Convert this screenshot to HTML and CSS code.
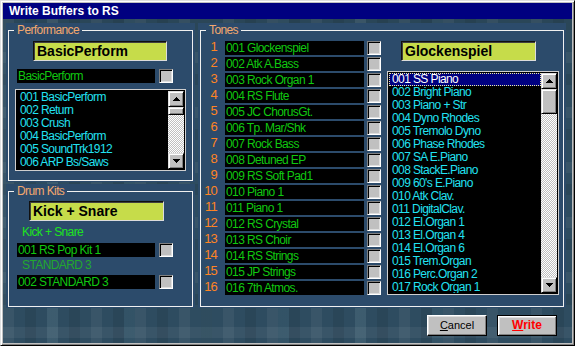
FILE: index.html
```html
<!DOCTYPE html>
<html>
<head>
<meta charset="utf-8">
<link rel="stylesheet" href="styles.css">
</head>
<body>
<div class="window">
  <div class="titlebar">Write Buffers to RS</div>
  <div class="client">
    <div class="main">
      <div class="leftcol">
        <div class="panel perf">
          <fieldset class="group">
            <legend>Performance</legend>
            <div class="lcd lcd-perf">BasicPerform</div>
            <div class="fieldrow fr-perf"><div class="field f-left">BasicPerform</div><span class="chk"></span></div>
            <div class="listbox lb-small">
              <ul class="items">
                <li>001 BasicPerform</li>
                <li>002 Return</li>
                <li>003 Crush</li>
                <li>004 BasicPerform</li>
                <li>005 SoundTrk1912</li>
                <li>006 ARP Bs/Saws</li>
              </ul>
              <div class="sbar">
                <div class="sbtn"><svg width="7" height="4" viewBox="0 0 7 4"><polygon points="3.5,0 7,4 0,4" fill="#000" shape-rendering="crispEdges"/></svg></div>
                <div class="thumb th-small"></div>
                <div class="track"></div>
                <div class="sbtn"><svg width="7" height="4" viewBox="0 0 7 4"><polygon points="0,0 7,0 3.5,4" fill="#000" shape-rendering="crispEdges"/></svg></div>
              </div>
            </div>
          </fieldset>
        </div>
        <div class="panel drums">
          <fieldset class="group">
            <legend>Drum Kits</legend>
            <div class="lcd lcd-drum">Kick + Snare</div>
            <div class="glabel g-bright">Kick + Snare</div>
            <div class="fieldrow fr-drum1"><div class="field f-left">001 RS Pop Kit 1</div><span class="chk"></span></div>
            <div class="glabel g-dark">STANDARD 3</div>
            <div class="fieldrow fr-drum2"><div class="field f-left">002 STANDARD 3</div><span class="chk"></span></div>
          </fieldset>
        </div>
      </div>
      <div class="panel tones">
        <fieldset class="group">
          <legend>Tones</legend>
          <div class="tones-body">
            <div class="tone-rows">
              <div class="trow"><span class="num">1</span><div class="field f-tone">001 Glockenspiel</div><span class="chk"></span></div>
              <div class="trow"><span class="num">2</span><div class="field f-tone">002 Atk A.Bass</div><span class="chk"></span></div>
              <div class="trow"><span class="num">3</span><div class="field f-tone">003 Rock Organ 1</div><span class="chk"></span></div>
              <div class="trow"><span class="num">4</span><div class="field f-tone">004 RS Flute</div><span class="chk"></span></div>
              <div class="trow"><span class="num">5</span><div class="field f-tone">005 JC ChorusGt.</div><span class="chk"></span></div>
              <div class="trow"><span class="num">6</span><div class="field f-tone">006 Tp. Mar/Shk</div><span class="chk"></span></div>
              <div class="trow"><span class="num">7</span><div class="field f-tone">007 Rock Bass</div><span class="chk"></span></div>
              <div class="trow"><span class="num">8</span><div class="field f-tone">008 Detuned EP</div><span class="chk"></span></div>
              <div class="trow"><span class="num">9</span><div class="field f-tone">009 RS Soft Pad1</div><span class="chk"></span></div>
              <div class="trow"><span class="num">10</span><div class="field f-tone">010 Piano 1</div><span class="chk"></span></div>
              <div class="trow"><span class="num">11</span><div class="field f-tone">011 Piano 1</div><span class="chk"></span></div>
              <div class="trow"><span class="num">12</span><div class="field f-tone">012 RS Crystal</div><span class="chk"></span></div>
              <div class="trow"><span class="num">13</span><div class="field f-tone">013 RS Choir</div><span class="chk"></span></div>
              <div class="trow"><span class="num">14</span><div class="field f-tone">014 RS Strings</div><span class="chk"></span></div>
              <div class="trow"><span class="num">15</span><div class="field f-tone">015 JP Strings</div><span class="chk"></span></div>
              <div class="trow"><span class="num">16</span><div class="field f-tone">016 7th Atmos.</div><span class="chk"></span></div>
            </div>
            <div class="tone-right">
              <div class="lcd lcd-tone">Glockenspiel</div>
              <div class="listbox lb-big">
                <ul class="items">
                  <li class="sel">001 SS Piano</li>
                  <li>002 Bright Piano</li>
                  <li>003 Piano + Str</li>
                  <li>004 Dyno Rhodes</li>
                  <li>005 Tremolo Dyno</li>
                  <li>006 Phase Rhodes</li>
                  <li>007 SA E.Piano</li>
                  <li>008 StackE.Piano</li>
                  <li>009 60's E.Piano</li>
                  <li>010 Atk Clav.</li>
                  <li>011 DigitalClav.</li>
                  <li>012 El.Organ 1</li>
                  <li>013 El.Organ 4</li>
                  <li>014 El.Organ 6</li>
                  <li>015 Trem.Organ</li>
                  <li>016 Perc.Organ 2</li>
                  <li>017 Rock Organ 1</li>
                </ul>
                <div class="sbar">
                  <div class="sbtn"><svg width="7" height="4" viewBox="0 0 7 4"><polygon points="3.5,0 7,4 0,4" fill="#000" shape-rendering="crispEdges"/></svg></div>
                  <div class="thumb th-big"></div>
                  <div class="track"></div>
                  <div class="sbtn"><svg width="7" height="4" viewBox="0 0 7 4"><polygon points="0,0 7,0 3.5,4" fill="#000" shape-rendering="crispEdges"/></svg></div>
                </div>
              </div>
            </div>
          </div>
        </fieldset>
      </div>
    </div>
    <div class="buttons">
      <button class="btn btn-cancel"><u>C</u>ancel</button>
      <button class="btn btn-write"><u>W</u>rite</button>
    </div>
  </div>
</div>
</body>
</html>
```
FILE: styles.css
```css
* { box-sizing: border-box; }
html, body { margin: 0; padding: 0; }
body {
  width: 575px;
  height: 346px;
  overflow: hidden;
  background: #c0c0c0;
  font-family: "Liberation Sans", Arial, sans-serif;
}
.window {
  width: 575px;
  height: 346px;
  display: flex;
  flex-direction: column;
  background: #c0c0c0;
  border: 1px solid;
  border-color: #dfdfdf #000 #000 #dfdfdf;
  box-shadow: inset 1px 1px 0 #fff, inset -1px -1px 0 #808080;
  padding: 2px;
}
.titlebar {
  flex: none;
  height: 16px;
  background: #000080;
  color: #fff;
  font: bold 12px/16px "Liberation Sans", Arial, sans-serif;
  padding-left: 6px;
}
.client {
  flex: 1;
  display: flex;
  flex-direction: column;
  background-color: #2e4c60;
  background-image:
    linear-gradient(90deg, rgba(255,255,255,0.05) 0 11px, transparent 11px 22px, rgba(0,0,0,0.08) 22px 33px, transparent 33px 44px),
    linear-gradient(rgba(0,0,0,0.08) 0 11px, transparent 11px 33px, rgba(255,255,255,0.05) 33px 44px, transparent 44px 55px),
    linear-gradient(90deg, transparent 0 44px, rgba(90,130,150,0.12) 44px 55px, transparent 55px 77px);
  background-size: 44px 100%, 100% 55px, 77px 100%;
}
.main {
  display: flex;
  gap: 3px;
  padding: 4px 0 0 3px;
}
.leftcol {
  width: 189px;
  display: flex;
  flex-direction: column;
  gap: 2px;
}
.panel {
  background: #2c4b6b;
  padding: 1px 2px 1px 2px;
  display: flex;
  flex-direction: column;
}
.perf { height: 159px; }
.drums { height: 124px; }
.tones { width: 368px; height: 285px; }
.group {
  flex: 1;
  margin: 0;
  padding: 0;
  min-width: 0;
  border: 1px solid #f0f0f0;
}
.group legend {
  margin-left: 5px;
  padding: 0 3px;
  font: 12px/12px "Liberation Sans", Arial, sans-serif;
  letter-spacing: -0.6px;
  color: #f2a86e;
}
.lcd {
  height: 20px;
  background: #c6dc4a;
  color: #000;
  font: bold 14px/18px "Liberation Sans", Arial, sans-serif;
  padding-left: 3px;
  border: 1px solid;
  border-color: #101010 #dcdcdc #dcdcdc #101010;
  box-shadow: inset 1px 1px 0 #404040;
  white-space: nowrap;
}
.lcd-perf { width: 134px; margin: 5px 0 0 24px; }
.lcd-drum { width: 135px; margin: 4px 0 0 20px; }
.lcd-tone { width: 135px; margin: 0 0 0 14px; }
.fieldrow { display: flex; align-items: flex-start; padding-left: 8px; }
.fr-perf { margin-top: 8px; }
.fr-drum1 { margin-top: 4px; }
.fr-drum2 { margin-top: 3px; }
.field {
  height: 14px;
  background: #000;
  color: #10c810;
  font: 12px/14px "Liberation Sans", Arial, sans-serif;
  letter-spacing: -0.6px;
  padding-left: 1px;
  white-space: nowrap;
  overflow: hidden;
}
.f-left { width: 138px; }
.f-tone { width: 139px; margin-left: 8px; }
.chk {
  flex: none;
  width: 14px;
  height: 14px;
  margin-left: 4px;
  background: #c0c0c0;
  border: 1px solid;
  border-color: #808080 #fff #fff #808080;
  box-shadow: inset 1px 1px 0 #000, inset -1px -1px 0 #dfdfdf;
}
.trow .chk { margin-left: 3px; }
.glabel {
  height: 14px;
  padding-left: 13px;
  font: 12px/14px "Liberation Sans", Arial, sans-serif;
  letter-spacing: -0.6px;
}
.g-bright { color: #1ee41e; margin-top: 4px; }
.g-dark { color: #22a82e; margin-top: 1px; }
.listbox {
  display: flex;
  background: #000;
  border: 1px solid #cfcfcf;
  padding: 1px;
}
.lb-small { width: 171px; height: 82px; margin: 6px 0 0 6px; }
.lb-big { width: 172px; height: 224px; margin-top: 10px; }
.items {
  flex: 1;
  min-width: 0;
  list-style: none;
  margin: 0;
  padding: 0;
  overflow: hidden;
  font: 12px/13px "Liberation Sans", Arial, sans-serif;
  letter-spacing: -0.6px;
  color: #22e2f2;
}
.items li {
  height: 13px;
  padding-left: 3px;
  white-space: nowrap;
}
.items li.sel {
  background: #000080;
  color: #fff;
  outline: 1px dotted #f0f0a0;
  outline-offset: -1px;
}
.sbar {
  flex: none;
  width: 16px;
  display: flex;
  flex-direction: column;
}
.sbtn, .thumb {
  flex: none;
  background: #c0c0c0;
  border: 1px solid;
  border-color: #dfdfdf #000 #000 #dfdfdf;
  box-shadow: inset 1px 1px 0 #fff, inset -1px -1px 0 #808080;
}
.sbtn {
  height: 16px;
  display: flex;
  align-items: center;
  justify-content: center;
}
.sbtn svg { display: block; }
.th-small { height: 8px; }
.th-big { height: 25px; }
.track {
  flex: 1;
  background-color: #c0c0c0;
  background-image: conic-gradient(#fff 25%, #c0c0c0 0 50%, #fff 0 75%, #c0c0c0 0);
  background-size: 2px 2px;
}
.tones-body {
  display: flex;
  padding-top: 5px;
}
.tone-rows {
  display: flex;
  flex-direction: column;
  gap: 2px;
}
.trow {
  display: flex;
  align-items: flex-start;
  height: 14px;
}
.num {
  width: 16px;
  height: 14px;
  text-align: right;
  font: 13px/11px "Liberation Sans", Arial, sans-serif;
  letter-spacing: -0.8px;
  color: #ff8424;
}
.tone-right {
  margin-left: 6px;
  display: flex;
  flex-direction: column;
}
.buttons {
  display: flex;
  justify-content: flex-end;
  gap: 10px;
  padding-right: 15px;
  margin-top: 7px;
}
.btn {
  width: 60px;
  height: 21px;
  padding: 0;
  background: #c0c0c0;
  border: 1px solid;
  border-color: #fff #000 #000 #fff;
  box-shadow: inset -1px -1px 0 #808080, inset 1px 1px 0 #dfdfdf;
  font: 11px/17px "Liberation Sans", Arial, sans-serif;
  color: #000;
}
.btn-write {
  border: 1px solid #000;
  box-shadow: inset 1px 1px 0 #fff, inset -1px -1px 0 #808080, inset 2px 2px 0 #dfdfdf;
  color: #ff0000;
  font-weight: bold;
  font-size: 12px;
}
.btn u { text-decoration-thickness: 1px; text-underline-offset: 1px; }
```
